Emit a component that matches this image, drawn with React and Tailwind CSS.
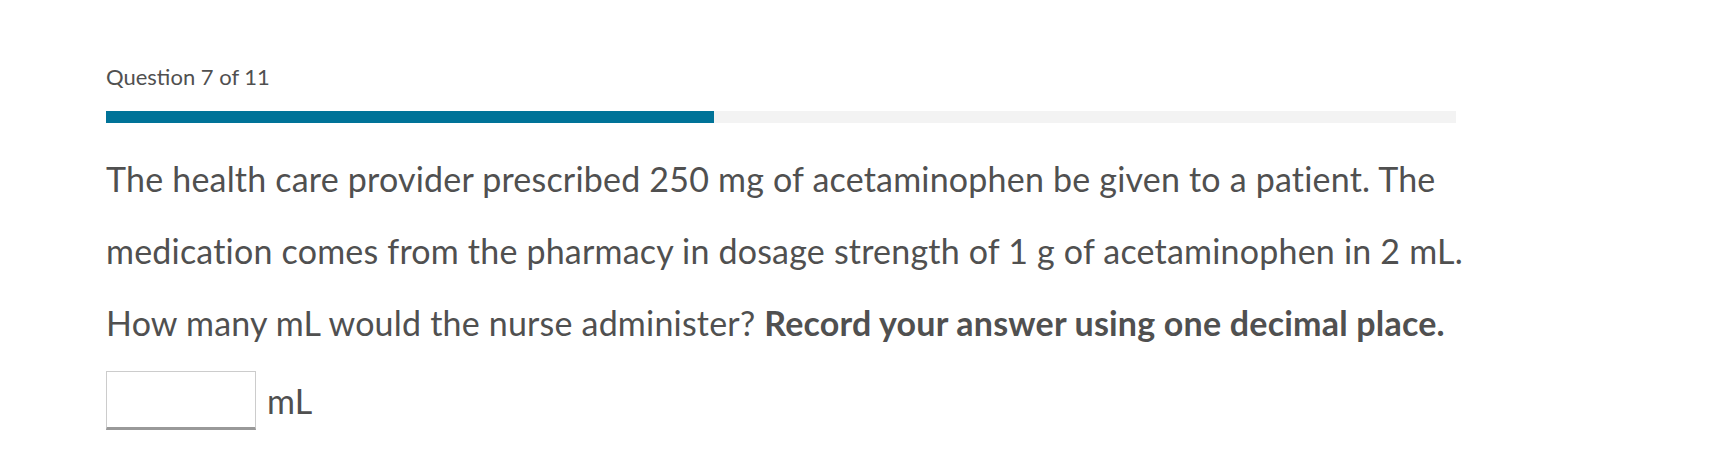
export default function App() {
  return (
    <div className="min-h-screen bg-white font-['Lato',sans-serif] text-[#505050]">
      <div className="pl-[106px] pt-[62px] w-[1456px]">
        <div className="text-[22px] leading-[30px]">Question 7 of 11</div>
        <div className="mt-[19px] h-[12px] w-[1350px] bg-[#f3f3f3]">
          <div className="h-full w-[608px] bg-[#007398]" />
        </div>
        <div className="mt-[20px] w-[1350px] text-[34px] leading-[72px] whitespace-nowrap tracking-[0.2px]">
          <p>The health care provider prescribed 250 mg of acetaminophen be given to a patient. The</p>
          <p>medication comes from the pharmacy in dosage strength of 1 g of acetaminophen in 2 mL.</p>
          <p>
            How many mL would the nurse administer?{" "}
            <strong className="font-bold">Record your answer using one decimal place.</strong>
          </p>
        </div>
        <div className="mt-[12px] flex items-center gap-[11px]">
          <input
            type="text"
            className="h-[59px] w-[150px] border border-[#cccccc] border-b-[3px] border-b-[#999999] bg-white px-2 text-[30px] outline-none"
          />
          <span className="text-[34px]">mL</span>
        </div>
      </div>
    </div>
  );
}
